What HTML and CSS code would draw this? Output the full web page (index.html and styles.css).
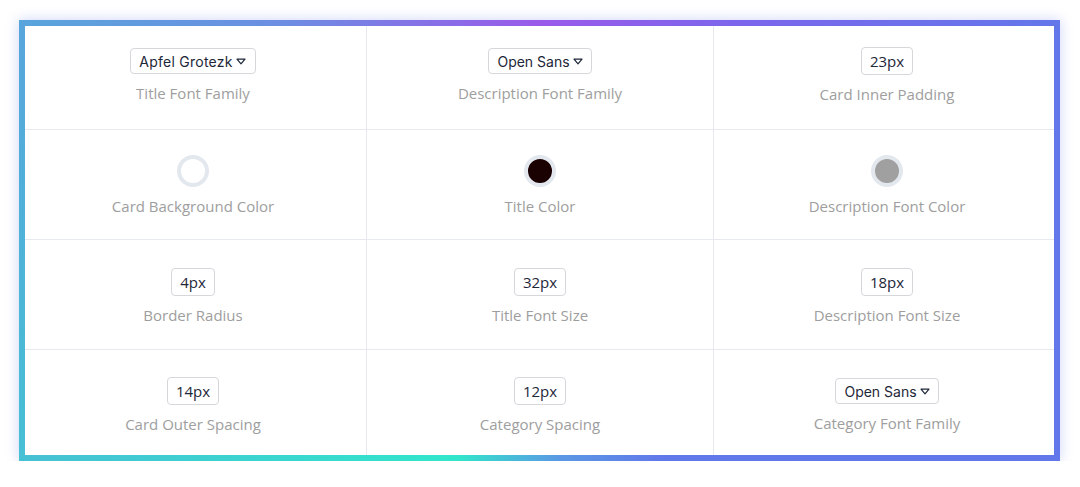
FILE: index.html
```html
<!DOCTYPE html>
<html>
<head>
<meta charset="utf-8">
<link rel="stylesheet" href="styles.css">
</head>
<body>
<div class="frame">
  <div class="grid">
    <div class="cell">
      <div class="select">Apfel Grotezk<svg class="caret" viewBox="0 0 10 7"><path d="M1 1.2 H9 L5 5.8 Z"/></svg></div>
      <div class="label">Title Font Family</div>
    </div>
    <div class="cell">
      <div class="select">Open Sans<svg class="caret" viewBox="0 0 10 7"><path d="M1 1.2 H9 L5 5.8 Z"/></svg></div>
      <div class="label">Description Font Family</div>
    </div>
    <div class="cell">
      <div class="value">23px</div>
      <div class="label">Card Inner Padding</div>
    </div>

    <div class="cell">
      <div class="swatch swatch-white"></div>
      <div class="label">Card Background Color</div>
    </div>
    <div class="cell">
      <div class="swatch swatch-dark"></div>
      <div class="label">Title Color</div>
    </div>
    <div class="cell">
      <div class="swatch swatch-grey"></div>
      <div class="label">Description Font Color</div>
    </div>

    <div class="cell">
      <div class="value">4px</div>
      <div class="label">Border Radius</div>
    </div>
    <div class="cell">
      <div class="value">32px</div>
      <div class="label">Title Font Size</div>
    </div>
    <div class="cell">
      <div class="value">18px</div>
      <div class="label">Description Font Size</div>
    </div>

    <div class="cell">
      <div class="value">14px</div>
      <div class="label">Card Outer Spacing</div>
    </div>
    <div class="cell">
      <div class="value">12px</div>
      <div class="label">Category Spacing</div>
    </div>
    <div class="cell">
      <div class="select">Open Sans<svg class="caret" viewBox="0 0 10 7"><path d="M1 1.2 H9 L5 5.8 Z"/></svg></div>
      <div class="label">Category Font Family</div>
    </div>
  </div>
</div>
</body>
</html>
```

FILE: styles.css
```css
html, body {
  margin: 0;
  background: #ffffff;
}
body {
  padding: 20px 20px 0 19px;
  font-family: "Open Sans", "Liberation Sans", sans-serif;
}
.frame {
  position: relative;
  width: 1041px;
  height: 441px;
  box-sizing: border-box;
  padding: 6px;
  background:
    linear-gradient(90deg, #58a5dc 0%, #6c8ee2 25%, #9a5aea 50%, #7a66ec 70%, #6377ea 100%) top / 100% 6px no-repeat,
    linear-gradient(90deg, #47c0d4 0%, #3ad6cf 25%, #31e6ca 42%, #5b98e4 52%, #6178ea 62%, #6177ea 100%) bottom / 100% 6px no-repeat,
    linear-gradient(180deg, #58a5dc 0%, #4fb2d8 50%, #47c0d4 100%) left / 6px 100% no-repeat,
    #6177ea;
  box-shadow: 0 0 12px rgba(98, 120, 234, 0.32);
}
.frame::before {
  content: "";
  position: absolute;
  inset: 0;
  background: inherit;
  filter: blur(8px);
  opacity: 0.5;
  z-index: -1;
}
.grid {
  display: grid;
  grid-template-columns: 342px 347px 1fr;
  grid-template-rows: 104px 110px 110px 1fr;
  height: 100%;
  background: #ffffff;
}
.cell {
  display: flex;
  flex-direction: column;
  align-items: center;
  justify-content: center;
  gap: 9px;
  border-right: 1px solid #e6e9f0;
  border-bottom: 1px solid #e6e9f0;
  box-sizing: border-box;
}
.cell:nth-child(3n+1) {
  padding-right: 5px;
}
.cell:nth-child(3n) {
  border-right: none;
  padding-left: 6px;
}
.cell:nth-child(n+10) {
  border-bottom: none;
  padding-top: 6px;
}
.cell:nth-child(-n+3) {
  padding-bottom: 4px;
}
.cell:nth-child(n+7):nth-child(-n+9) {
  padding-top: 3px;
}
.label {
  font-size: 15px;
  line-height: 20px;
  color: #9e9e9e;
  white-space: nowrap;
}
.select {
  display: inline-flex;
  align-items: center;
  gap: 3px;
  height: 26px;
  box-sizing: border-box;
  padding: 0 8px 0 8px;
  border: 1px solid #d6d7db;
  border-radius: 4px;
  font-family: Inter, "Noto Sans", sans-serif;
  font-size: 14px;
  color: #1d2738;
  white-space: nowrap;
}
.cell:first-child .select {
  letter-spacing: 0.25px;
  padding: 0 9px 0 8px;
}
.caret {
  width: 10px;
  height: 7px;
  fill: none;
  stroke: #1d2738;
  stroke-width: 1.2;
  stroke-linejoin: round;
}
.value {
  display: inline-flex;
  align-items: center;
  height: 28px;
  box-sizing: border-box;
  padding: 0 8px;
  border: 1px solid #d6d7db;
  border-radius: 4px;
  font-size: 15px;
  color: #1d2738;
}
.swatch {
  width: 32px;
  height: 32px;
  box-sizing: border-box;
  border-radius: 50%;
  border: 4px solid #e3e7ee;
  margin-top: 2px;
}
.swatch-white {
  background: #ffffff;
}
.swatch-dark {
  background: #1a0202;
}
.swatch-grey {
  background: #a0a0a0;
}
```
